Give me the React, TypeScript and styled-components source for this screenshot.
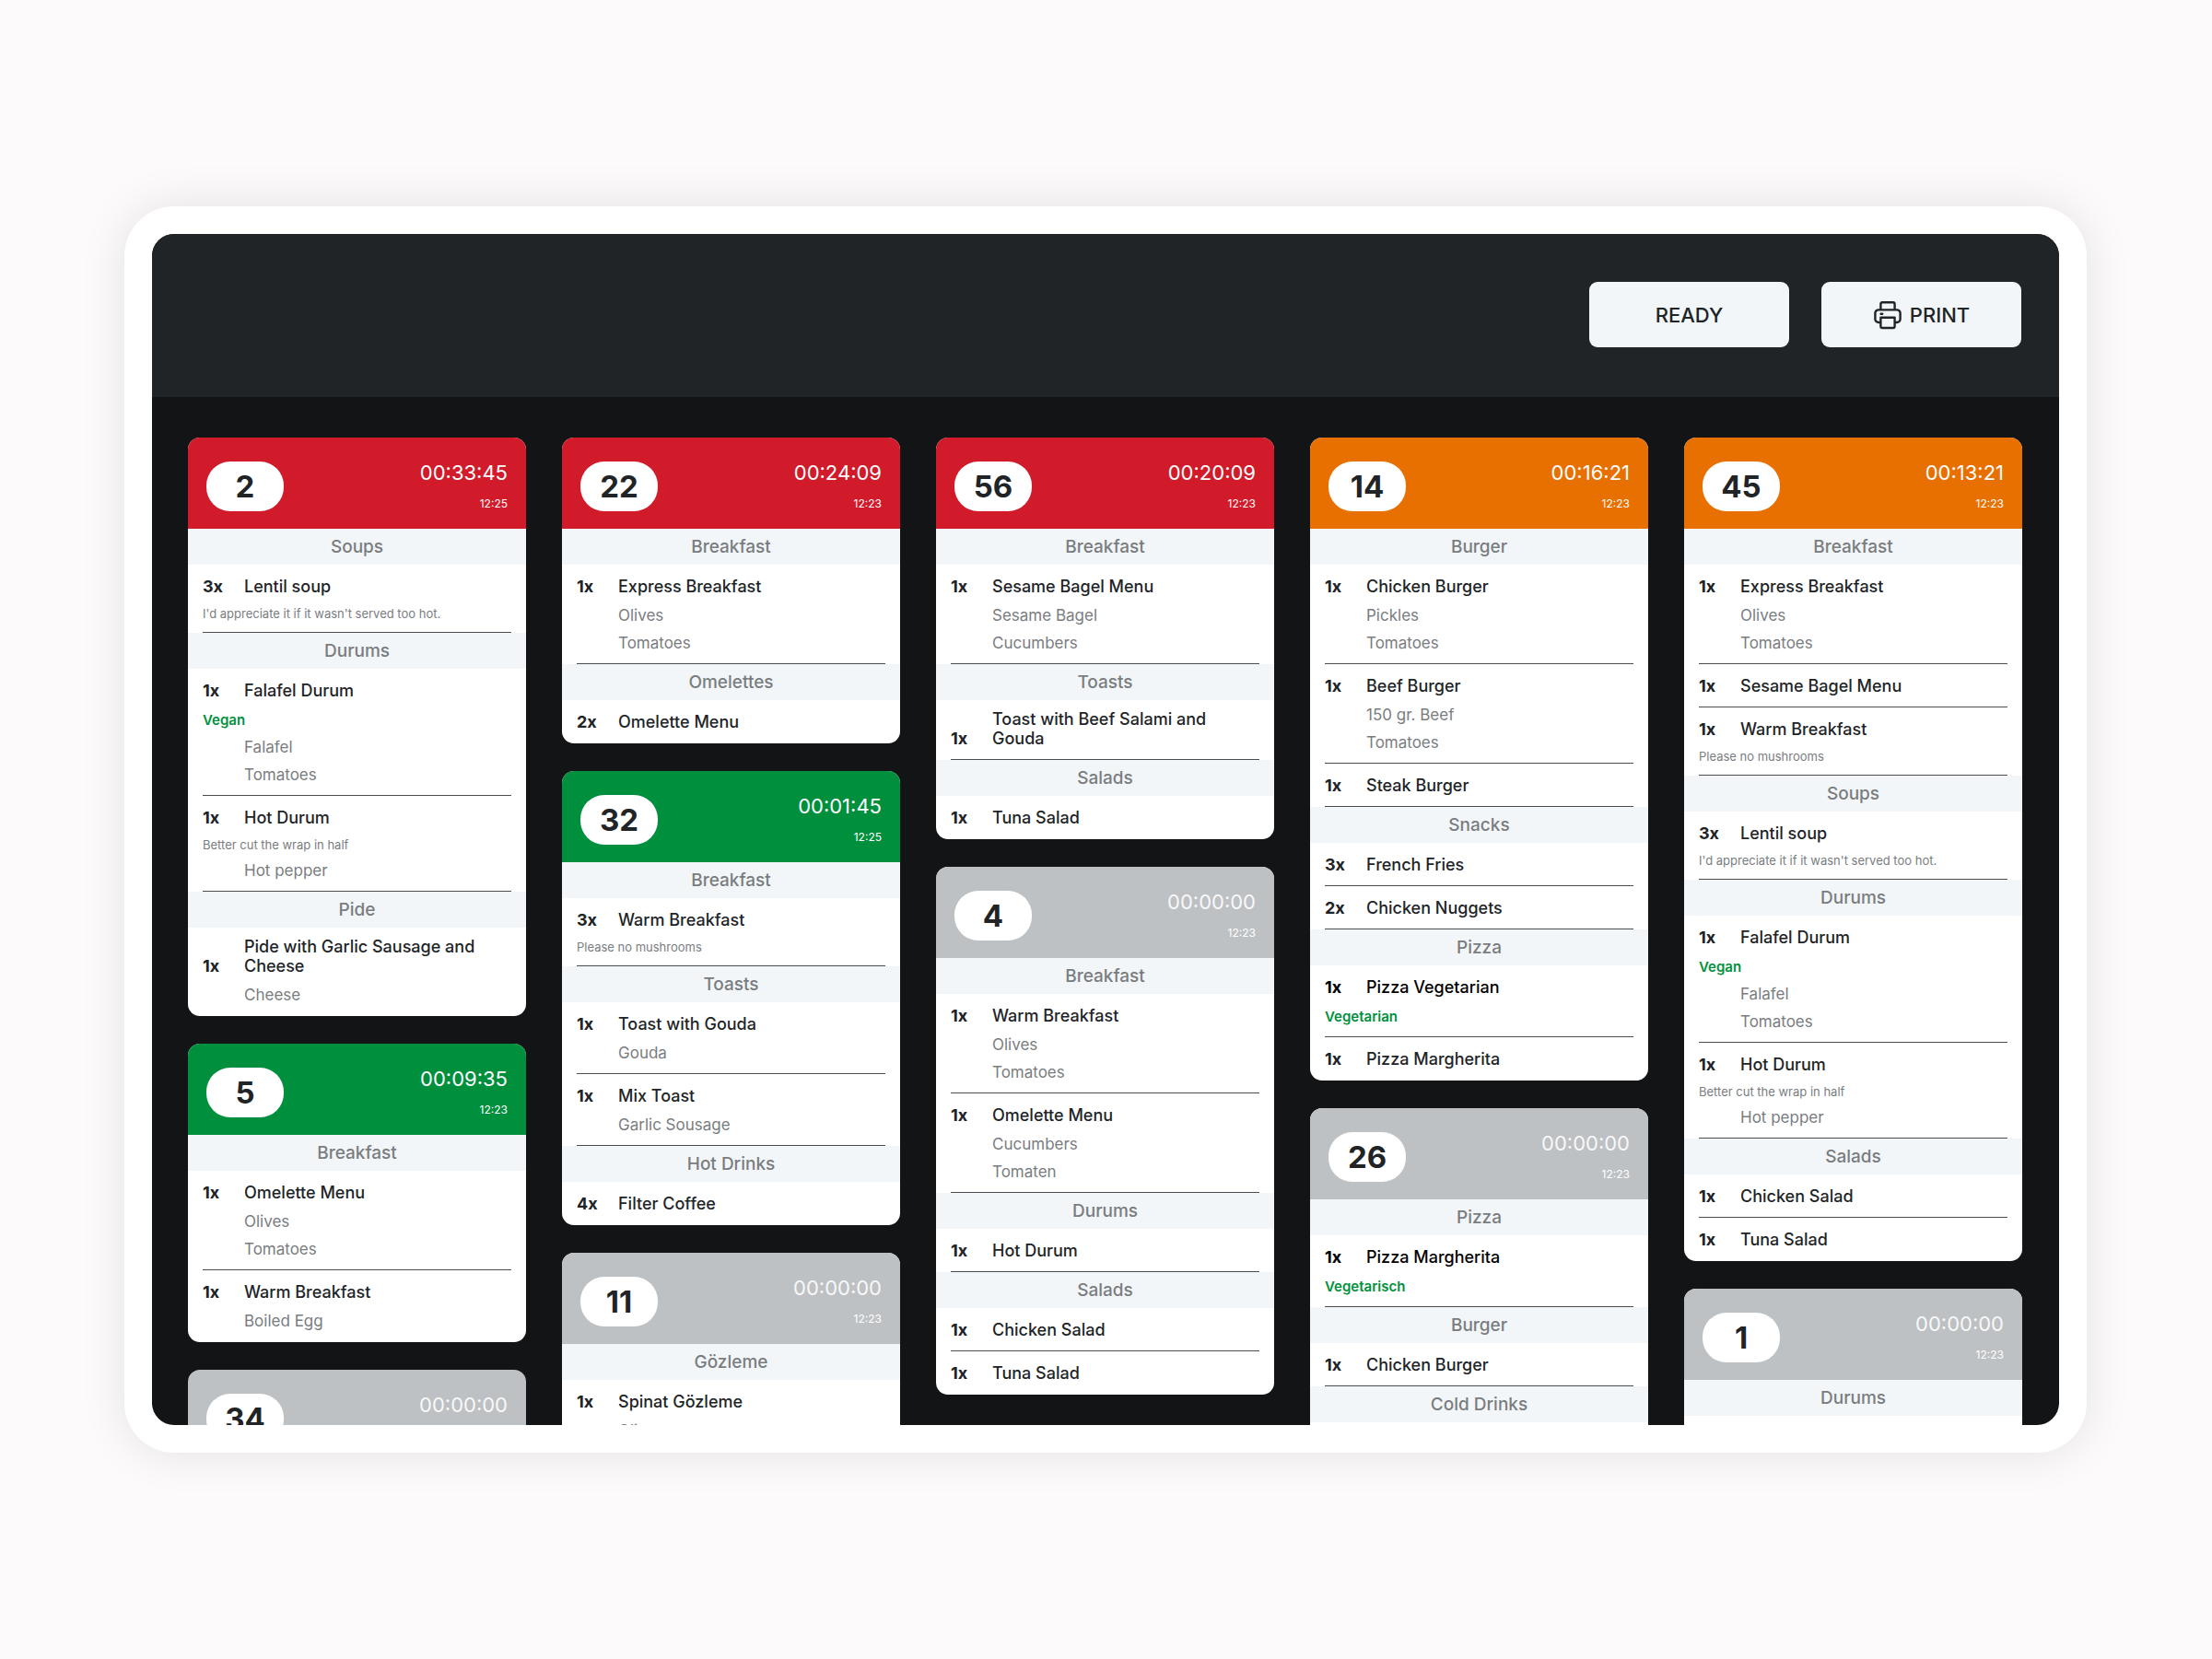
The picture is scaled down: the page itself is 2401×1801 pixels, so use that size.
import React from "react";
import styled, { createGlobalStyle } from "styled-components";

type Tone = "red" | "green" | "orange" | "gray";

interface Item {
  qty: string;
  name: string;
  note?: string;
  diet?: string;
  extras?: string[];
  strong?: boolean;
}

interface Section {
  title: string;
  items: Item[];
}

interface Order {
  table: string;
  timer: string;
  time: string;
  tone: Tone;
  sections: Section[];
}

const tones: Record<Tone, string> = {
  red: "#d11a2a",
  green: "#008f3c",
  orange: "#e77000",
  gray: "#bdc1c4",
};

const ink = "#212427";
const muted = "#7a7d7f";

const GlobalStyle = createGlobalStyle`
  *, *::before, *::after { box-sizing: border-box; }
  body {
    margin: 0;
    background: #fcfafb;
    color: ${ink};
    font-family: Inter, "Open Sans", sans-serif;
  }
`;

const Stage = styled.div`
  display: flex;
  height: 100vh;
  padding: 224px 136px 224px 135px;
`;

const Bezel = styled.div`
  flex: 1;
  display: flex;
  min-width: 0;
  padding: 30px;
  border-radius: 54px;
  background: #fff;
  box-shadow: 0 0 50px rgba(40, 20, 30, 0.1);
`;

const Screen = styled.div`
  flex: 1;
  display: flex;
  flex-direction: column;
  min-width: 0;
  overflow: hidden;
  border-radius: 24px;
  background: #131416;
`;

const TopBar = styled.header`
  flex: none;
  display: flex;
  justify-content: flex-end;
  gap: 35px;
  padding: 52px 41px 54px;
  background: #212427;
`;

const ActionButton = styled.button`
  display: flex;
  align-items: center;
  justify-content: center;
  gap: 8px;
  width: 217px;
  height: 71px;
  padding: 0;
  border: 0;
  border-radius: 9px;
  background: #f2f6f9;
  color: ${ink};
  font: 500 22px/32px Inter, "Open Sans", sans-serif;
  cursor: pointer;
`;

const Board = styled.main`
  flex: 1;
  display: grid;
  grid-template-columns: repeat(5, minmax(0, 1fr));
  align-items: start;
  gap: 39px;
  min-height: 0;
  padding: 44px 40px 0 39px;
`;

const Column = styled.div`
  display: flex;
  flex-direction: column;
  gap: 30px;
`;

const Card = styled.article`
  overflow: hidden;
  border-radius: 13px;
  background: #fff;
`;

const CardHeader = styled.header<{ $tone: Tone }>`
  display: flex;
  align-items: center;
  justify-content: space-between;
  height: 99px;
  padding: 7px 20px 0;
  background: ${(p) => tones[p.$tone]};
  color: #fff;
`;

const TableNumber = styled.h2`
  width: 84px;
  margin: 0;
  border-radius: 26px;
  background: #fff;
  color: ${ink};
  font-size: 33px;
  line-height: 54px;
  font-weight: 700;
  text-align: center;
`;

const Times = styled.div`
  display: flex;
  flex-direction: column;
  align-items: flex-end;
  gap: 9px;
  padding-bottom: 4px;
`;

const Timer = styled.span<{ $idle: boolean }>`
  font-size: 22px;
  line-height: 32px;
  font-weight: 400;
  opacity: ${(p) => (p.$idle ? 0.9 : 1)};
`;

const PlacedAt = styled.time`
  font-size: 12px;
  line-height: 18px;
`;

const SectionTitle = styled.h3`
  margin: 0;
  background: #f2f6f9;
  color: ${muted};
  font-size: 19px;
  line-height: 39px;
  font-weight: 500;
  text-align: center;
`;

const ItemList = styled.ul`
  margin: 0;
  padding: 0 16px;
  list-style: none;
`;

const ItemRow = styled.li<{ $strong: boolean; $last: boolean }>`
  padding: 10px 0 12px;
  border-bottom: 1px solid ${(p) => (p.$last ? "transparent" : "#4a4c4f")};
  color: ${(p) => (p.$strong ? "#000" : ink)};
`;

const ItemLine = styled.div`
  display: grid;
  grid-template-columns: 45px minmax(0, 1fr);
  align-items: end;
  min-height: 24px;
  font-size: 18px;
  line-height: 21px;
`;

const Quantity = styled.strong`
  font-weight: 700;
`;

const ItemName = styled.span`
  font-weight: 500;
`;

const Note = styled.p`
  margin: 12px 0 0;
  color: ${muted};
  font-size: 13px;
  line-height: 15px;
`;

const Diet = styled.p`
  margin: 12px 0 0;
  color: #00913d;
  font-size: 15px;
  line-height: 19px;
  font-weight: 600;
`;

const Extras = styled.ul`
  display: flex;
  flex-direction: column;
  gap: 10px;
  margin: 11px 0 0;
  padding: 0 0 0 45px;
  color: ${muted};
  font-size: 17px;
  line-height: 20px;
  list-style: none;

  ${Note} + &, ${Diet} + & {
    margin-top: 10px;
  }
`;

const BlankBody = styled.div`
  height: 120px;
`;

const PrinterIcon = () => (
  <svg width="32" height="32" viewBox="0 0 32 32" fill="none" stroke="currentColor" strokeWidth="2.4" strokeLinejoin="round" aria-hidden="true">
    <path d="M8.4 10.4V4a1.8 1.8 0 0 1 1.8-1.8h11.6A1.8 1.8 0 0 1 23.600 4v6.400" />
    <path d="M8.400 24H6a3.600 3.600 0 0 1-3.600-3.600V14A3.600 3.600 0 0 1 6 10.400h20A3.600 3.600 0 0 1 29.600 14v6.400A3.600 3.600 0 0 1 26 24h-2.400" />
    <path d="M8.400 18.800h15.200v9.400a1.800 1.800 0 0 1-1.800 1.800H10.200a1.800 1.800 0 0 1-1.800-1.800z" />
    <path d="M8.600 14.800h1.600" strokeLinecap="round" />
  </svg>
);

const olivesTomatoes = ["Olives", "Tomatoes"];
const lentil: Item = { qty: "3x", name: "Lentil soup", note: "I'd appreciate it if it wasn't served too hot." };
const falafel: Item = { qty: "1x", name: "Falafel Durum", diet: "Vegan", extras: ["Falafel", "Tomatoes"] };
const hotDurum: Item = { qty: "1x", name: "Hot Durum", note: "Better cut the wrap in half", extras: ["Hot pepper"] };
const express: Item = { qty: "1x", name: "Express Breakfast", extras: olivesTomatoes };
const tunaSalad: Item = { qty: "1x", name: "Tuna Salad" };
const chickenSalad: Item = { qty: "1x", name: "Chicken Salad" };

const columns: Order[][] = [
  [
    {
      table: "2", timer: "00:33:45", time: "12:25", tone: "red",
      sections: [
        { title: "Soups", items: [lentil] },
        { title: "Durums", items: [falafel, hotDurum] },
        { title: "Pide", items: [{ qty: "1x", name: "Pide with Garlic Sausage and Cheese", extras: ["Cheese"] }] },
      ],
    },
    {
      table: "5", timer: "00:09:35", time: "12:23", tone: "green",
      sections: [
        {
          title: "Breakfast",
          items: [
            { qty: "1x", name: "Omelette Menu", extras: olivesTomatoes },
            { qty: "1x", name: "Warm Breakfast", extras: ["Boiled Egg"] },
          ],
        },
      ],
    },
    { table: "34", timer: "00:00:00", time: "12:23", tone: "gray", sections: [] },
  ],
  [
    {
      table: "22", timer: "00:24:09", time: "12:23", tone: "red",
      sections: [
        { title: "Breakfast", items: [express] },
        { title: "Omelettes", items: [{ qty: "2x", name: "Omelette Menu" }] },
      ],
    },
    {
      table: "32", timer: "00:01:45", time: "12:25", tone: "green",
      sections: [
        { title: "Breakfast", items: [{ qty: "3x", name: "Warm Breakfast", note: "Please no mushrooms" }] },
        {
          title: "Toasts",
          items: [
            { qty: "1x", name: "Toast with Gouda", extras: ["Gouda"] },
            { qty: "1x", name: "Mix Toast", extras: ["Garlic Sousage"] },
          ],
        },
        { title: "Hot Drinks", items: [{ qty: "4x", name: "Filter Coffee" }] },
      ],
    },
    {
      table: "11", timer: "00:00:00", time: "12:23", tone: "gray",
      sections: [{ title: "Gözleme", items: [{ qty: "1x", name: "Spinat Gözleme", extras: ["Olives"] }] }],
    },
  ],
  [
    {
      table: "56", timer: "00:20:09", time: "12:23", tone: "red",
      sections: [
        { title: "Breakfast", items: [{ qty: "1x", name: "Sesame Bagel Menu", extras: ["Sesame Bagel", "Cucumbers"] }] },
        { title: "Toasts", items: [{ qty: "1x", name: "Toast with Beef Salami and Gouda" }] },
        { title: "Salads", items: [tunaSalad] },
      ],
    },
    {
      table: "4", timer: "00:00:00", time: "12:23", tone: "gray",
      sections: [
        {
          title: "Breakfast",
          items: [
            { qty: "1x", name: "Warm Breakfast", extras: olivesTomatoes },
            { qty: "1x", name: "Omelette Menu", extras: ["Cucumbers", "Tomaten"] },
          ],
        },
        { title: "Durums", items: [{ qty: "1x", name: "Hot Durum" }] },
        { title: "Salads", items: [chickenSalad, tunaSalad] },
      ],
    },
  ],
  [
    {
      table: "14", timer: "00:16:21", time: "12:23", tone: "orange",
      sections: [
        {
          title: "Burger",
          items: [
            { qty: "1x", name: "Chicken Burger", extras: ["Pickles", "Tomatoes"] },
            { qty: "1x", name: "Beef Burger", extras: ["150 gr. Beef", "Tomatoes"] },
            { qty: "1x", name: "Steak Burger" },
          ],
        },
        { title: "Snacks", items: [{ qty: "3x", name: "French Fries" }, { qty: "2x", name: "Chicken Nuggets" }] },
        {
          title: "Pizza",
          items: [
            { qty: "1x", name: "Pizza Vegetarian", diet: "Vegetarian", strong: true },
            { qty: "1x", name: "Pizza Margherita" },
          ],
        },
      ],
    },
    {
      table: "26", timer: "00:00:00", time: "12:23", tone: "gray",
      sections: [
        { title: "Pizza", items: [{ qty: "1x", name: "Pizza Margherita", diet: "Vegetarisch", strong: true }] },
        { title: "Burger", items: [{ qty: "1x", name: "Chicken Burger" }] },
        { title: "Cold Drinks", items: [] },
      ],
    },
  ],
  [
    {
      table: "45", timer: "00:13:21", time: "12:23", tone: "orange",
      sections: [
        {
          title: "Breakfast",
          items: [
            express,
            { qty: "1x", name: "Sesame Bagel Menu" },
            { qty: "1x", name: "Warm Breakfast", note: "Please no mushrooms" },
          ],
        },
        { title: "Soups", items: [lentil] },
        { title: "Durums", items: [falafel, hotDurum] },
        { title: "Salads", items: [chickenSalad, tunaSalad] },
      ],
    },
    {
      table: "1", timer: "00:00:00", time: "12:23", tone: "gray",
      sections: [{ title: "Durums", items: [] }],
    },
  ],
];

const OrderCard = ({ order }: { order: Order }) => (
  <Card>
    <CardHeader $tone={order.tone}>
      <TableNumber>{order.table}</TableNumber>
      <Times>
        <Timer $idle={order.tone === "gray"}>{order.timer}</Timer>
        <PlacedAt>{order.time}</PlacedAt>
      </Times>
    </CardHeader>
    {order.sections.map((section, s) => (
      <section key={section.title}>
        <SectionTitle>{section.title}</SectionTitle>
        {section.items.length === 0 && <BlankBody />}
        <ItemList>
          {section.items.map((item, i) => (
            <ItemRow
              key={item.name}
              $strong={Boolean(item.strong)}
              $last={s === order.sections.length - 1 && i === section.items.length - 1}
            >
              <ItemLine>
                <Quantity>{item.qty}</Quantity>
                <ItemName>{item.name}</ItemName>
              </ItemLine>
              {item.note && <Note>{item.note}</Note>}
              {item.diet && <Diet>{item.diet}</Diet>}
              {item.extras && (
                <Extras>
                  {item.extras.map((extra) => (
                    <li key={extra}>{extra}</li>
                  ))}
                </Extras>
              )}
            </ItemRow>
          ))}
        </ItemList>
      </section>
    ))}
  </Card>
);

export default function App() {
  return (
    <>
      <GlobalStyle />
      <Stage>
        <Bezel>
          <Screen>
            <TopBar>
              <ActionButton type="button">READY</ActionButton>
              <ActionButton type="button">
                <PrinterIcon />
                PRINT
              </ActionButton>
            </TopBar>
            <Board>
              {columns.map((orders, c) => (
                <Column key={c}>
                  {orders.map((order) => (
                    <OrderCard key={order.table} order={order} />
                  ))}
                </Column>
              ))}
            </Board>
          </Screen>
        </Bezel>
      </Stage>
    </>
  );
}
